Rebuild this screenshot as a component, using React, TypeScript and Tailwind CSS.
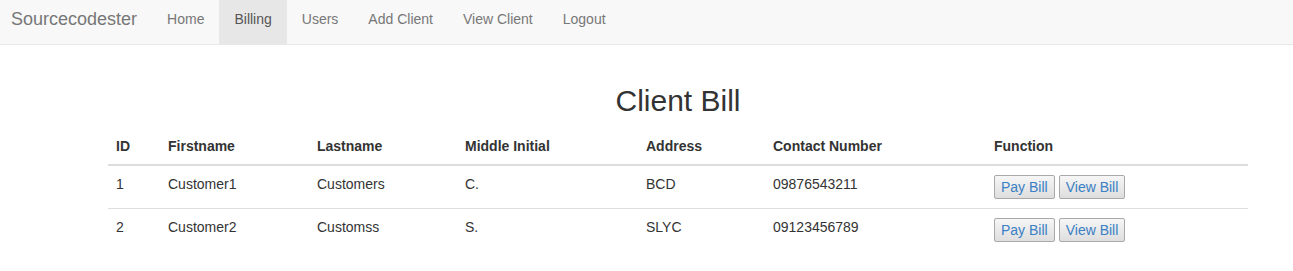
import React from 'react';

interface Client {
    id: number;
    firstname: string;
    lastname: string;
    middle: string;
    address: string;
    contact: string;
}

const clients: Client[] = [
    { id: 1, firstname: 'Customer1', lastname: 'Customers', middle: 'C.', address: 'BCD', contact: '09876543211' },
    { id: 2, firstname: 'Customer2', lastname: 'Customss', middle: 'S.', address: 'SLYC', contact: '09123456789' },
];

const navItems = ['Home', 'Billing', 'Users', 'Add Client', 'View Client', 'Logout'];

const BillButton: React.FC<{ label: string }> = ({ label }) => (
    <button className="h-[24px] px-[6px] rounded-[2px] border border-[#a9a9a9] bg-gradient-to-b from-[#f6f6f6] to-[#dedede] text-[14px] leading-[20px] text-[#3a80c4]">
        {label}
    </button>
);

const App: React.FC = () => {
    return (
        <div className="min-h-[271px] bg-white text-[#333] text-[14px] font-['Liberation_Sans',Arial,sans-serif]">
            <nav className="h-[45px] flex items-stretch bg-[#f8f8f8] border-b border-[#e7e7e7]">
                <a className="pl-[11px] pr-[15px] flex items-center text-[18px] text-[#777] pb-[5px]">Sourcecodester</a>
                <ul className="flex items-stretch">
                    {navItems.map((item) => (
                        <li
                            key={item}
                            className={
                                item === 'Billing'
                                    ? 'px-[15px] flex items-center pb-[5px] bg-[#e7e7e7] text-[#555]'
                                    : 'px-[15px] flex items-center pb-[5px] text-[#777]'
                            }
                        >
                            {item}
                        </li>
                    ))}
                </ul>
            </nav>

            <div className="ml-[108px] w-[1140px]">
                <h2 className="mt-[39px] mb-[11px] text-center text-[30px] leading-[33px]">Client Bill</h2>
                <table className="w-full text-left border-collapse">
                    <thead>
                        <tr className="font-bold">
                            <th className="w-[52px] px-[8px] py-[8px] leading-[20px] border-b-2 border-[#ddd]">ID</th>
                            <th className="w-[149px] px-[8px] py-[8px] leading-[20px] border-b-2 border-[#ddd]">Firstname</th>
                            <th className="w-[148px] px-[8px] py-[8px] leading-[20px] border-b-2 border-[#ddd]">Lastname</th>
                            <th className="w-[181px] px-[8px] py-[8px] leading-[20px] border-b-2 border-[#ddd]">Middle Initial</th>
                            <th className="w-[127px] px-[8px] py-[8px] leading-[20px] border-b-2 border-[#ddd]">Address</th>
                            <th className="w-[221px] px-[8px] py-[8px] leading-[20px] border-b-2 border-[#ddd]">Contact Number</th>
                            <th className="px-[8px] py-[8px] leading-[20px] border-b-2 border-[#ddd]">Function</th>
                        </tr>
                    </thead>
                    <tbody>
                        {clients.map((c, i) => (
                            <tr key={c.id} className={i === 0 ? 'align-top border-b border-[#ddd]' : 'align-top'}>
                                <td className="px-[8px] py-[8px] leading-[20px]">{c.id}</td>
                                <td className="px-[8px] py-[8px] leading-[20px]">{c.firstname}</td>
                                <td className="px-[8px] py-[8px] leading-[20px]">{c.lastname}</td>
                                <td className="px-[8px] py-[8px] leading-[20px]">{c.middle}</td>
                                <td className="px-[8px] py-[8px] leading-[20px]">{c.address}</td>
                                <td className="px-[8px] py-[8px] leading-[20px]">{c.contact}</td>
                                <td className="px-[8px] pt-[8px] pb-[9px] leading-[20px]">
                                    <div className="flex gap-[4px] pt-[1px]">
                                        <BillButton label="Pay Bill" />
                                        <BillButton label="View Bill" />
                                    </div>
                                </td>
                            </tr>
                        ))}
                    </tbody>
                </table>
            </div>
        </div>
    );
};

export default App;
